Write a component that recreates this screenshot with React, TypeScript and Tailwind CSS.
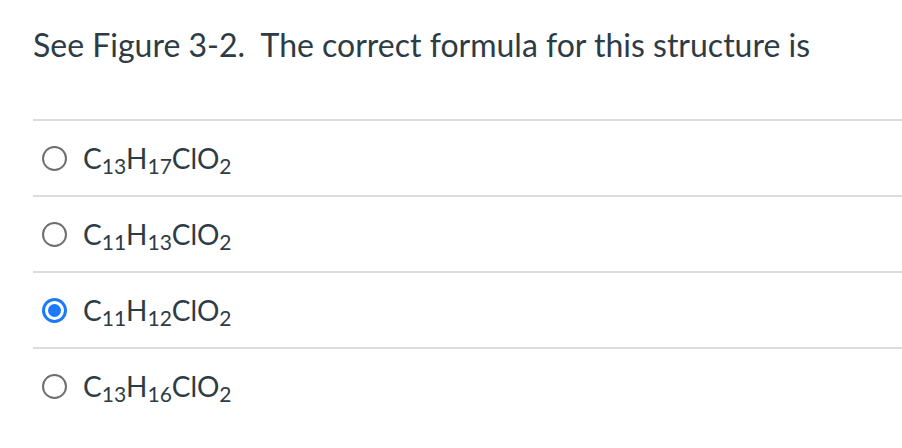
import React from "react";

type Option = { c: string; h: string; selected?: boolean };

const options: Option[] = [
  { c: "13", h: "17" },
  { c: "11", h: "13" },
  { c: "11", h: "12", selected: true },
  { c: "13", h: "16" },
];

const Radio = ({ selected }: { selected?: boolean }) =>
  selected ? (
    <span className="flex h-[25px] w-[25px] items-center justify-center rounded-full border-[3px] border-[#1a7af8] bg-white">
      <span className="h-[13px] w-[13px] rounded-full bg-[#1a7af8]" />
    </span>
  ) : (
    <span className="h-[25px] w-[25px] rounded-full border-2 border-[#6f6f6f] bg-white" />
  );

export default function App() {
  return (
    <div className="h-[448px] w-[902px] overflow-hidden bg-white pl-[33px] font-['Lato',sans-serif] text-[#2d3b45]">
      <div className="pt-[25px] text-[32px] leading-[40px] whitespace-pre">
        {"See Figure 3-2.  The correct formula for this structure is"}
      </div>

      <div className="mt-[54px]">
        {options.map((o, i) => (
          <div
            key={i}
            className="flex h-[76px] items-center border-t-2 border-[#dcdcdc]"
          >
            <span className="ml-[9px] mr-[16px] flex">
              <Radio selected={o.selected} />
            </span>
            <span className="text-[28px] leading-none">
              C<sub>{o.c}</sub>H<sub>{o.h}</sub>ClO<sub>2</sub>
            </span>
          </div>
        ))}
      </div>
    </div>
  );
}
